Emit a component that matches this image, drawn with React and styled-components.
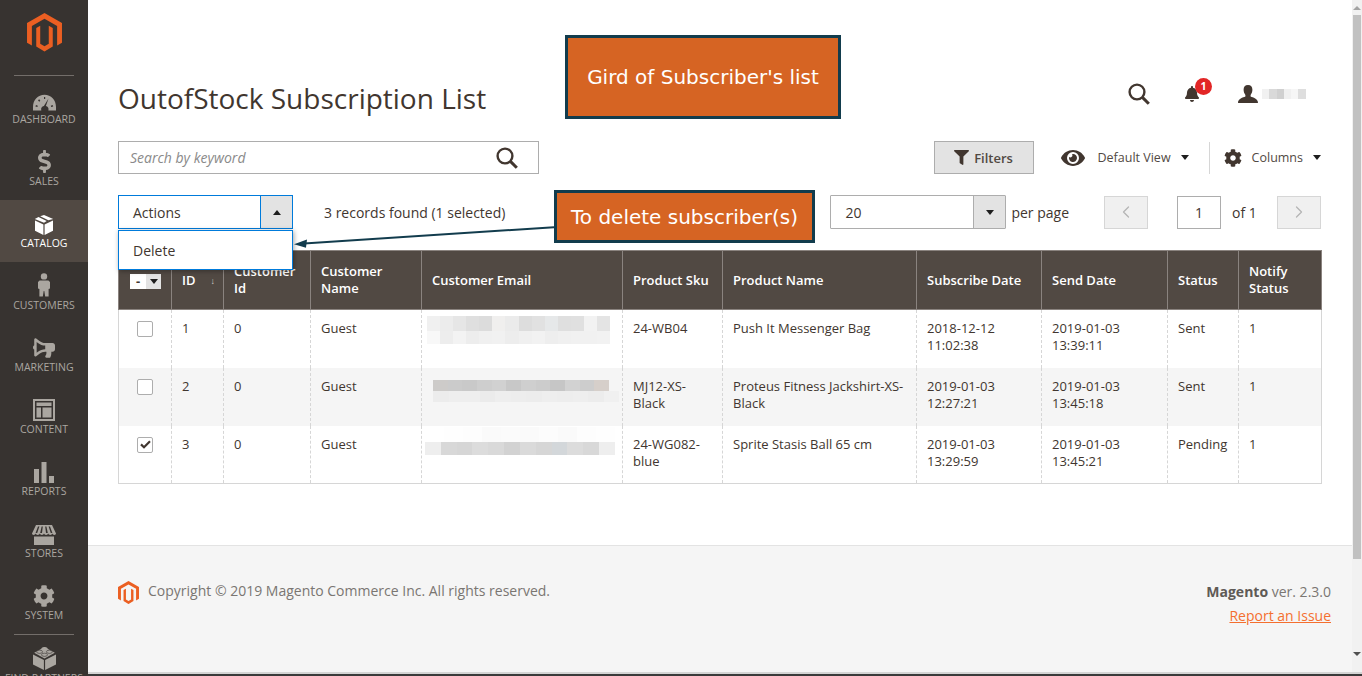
import styled, { createGlobalStyle } from "styled-components";
import { FaDollarSign, FaBullhorn, FaCog, FaBell, FaEye, FaFilter } from "react-icons/fa";
import { ChevronLeft, ChevronRight } from "lucide-react";

const GlobalStyle = createGlobalStyle`
  html, body { margin: 0; padding: 0; overflow: hidden; background: #fff; }
  * { box-sizing: border-box; }
  body { font-family: "Open Sans", sans-serif; color: #41362f; font-size: 14px; }
`;

const Page = styled.div`
  position: relative;
  display: flex;
  width: 1362px;
  height: 676px;
  overflow: hidden;
`;

const Sidebar = styled.nav`
  width: 88px;
  flex: none;
  height: 676px;
  background: #373330;
  overflow: hidden;
`;
const LogoWrap = styled.div`
  height: 75px;
  display: flex;
  justify-content: center;
  padding-top: 13px;
`;
const NavDivider = styled.div`
  height: 1px;
  margin: 0 14px;
  background: #736e6a;
`;
const NavItem = styled.div`
  height: 62px;
  display: flex;
  flex-direction: column;
  align-items: center;
  background: ${(p) => (p.$active ? "#514943" : "transparent")};
  color: ${(p) => (p.$active ? "#fff" : "#aaa6a0")};
`;
const NavIcon = styled.div`
  height: 36px;
  display: flex;
  align-items: flex-end;
  justify-content: center;
  padding-bottom: 1px;
  flex: none;
`;
const NavLabel = styled.div`
  font-size: 10.5px;
  line-height: 14px;
  height: 14px;
  white-space: nowrap;
`;

const Main = styled.div`
  flex: 1;
  display: flex;
  flex-direction: column;
  min-width: 0;
`;
const MainRow = styled.div`
  height: 672px;
  display: flex;
`;
const BottomStrip = styled.div`
  height: 4px;
  background: linear-gradient(#d4d4d4 0 2px, #3a3a3a 2px);
`;
const Content = styled.div`
  flex: 1;
  display: flex;
  flex-direction: column;
  min-width: 0;
`;
const Body = styled.div`
  height: 545px;
  padding: 0 31px 0 30px;
`;
const Scrollbar = styled.div`
  width: 10px;
  flex: none;
  background: #f1f1f1;
  display: flex;
  flex-direction: column;
  align-items: center;
`;
const ScrollThumb = styled.div`
  width: 8px;
  height: 544px;
  background: #c1c1c1;
`;
const ScrollArrow = styled.div`
  width: 0;
  height: 0;
  border-left: 4px solid transparent;
  border-right: 4px solid transparent;
  ${(p) => (p.$down ? "border-top: 4px solid #505050; margin-top: 93px;" : "border-bottom: 4px solid #a3a3a3; margin: 6px 0 5px;")}
`;

const HeaderBar = styled.header`
  height: 141px;
  display: flex;
  padding-top: 78px;
  justify-content: space-between;
`;
const Title = styled.h1`
  margin: 0;
  font-size: 28px;
  font-weight: 400;
  line-height: 40px;
  color: #41362f;
`;
const HeaderActions = styled.div`
  display: flex;
  align-items: flex-start;
  padding-top: 5px;
  margin-right: 8px;
`;
const HeaderIcon = styled.div`
  position: relative;
  display: flex;
  align-items: center;
  height: 22px;
  margin-left: ${(p) => p.$gap}px;
  color: #41362f;
`;
const Badge = styled.span`
  position: absolute;
  top: -5px;
  left: 11px;
  width: 17px;
  height: 17px;
  border-radius: 50%;
  background: #e22626;
  color: #fff;
  font-size: 10.5px;
  font-weight: 700;
  line-height: 17px;
  text-align: center;
`;
const BlurName = styled.div`
  display: flex;
  width: 51px;
  height: 10px;
  margin-left: 4px;
`;
const Pixel = styled.div`
  flex: 1;
  background: ${(p) => p.$c};
`;

const Toolbar = styled.div`
  height: 33px;
  display: flex;
  justify-content: space-between;
  margin-bottom: 21px;
`;
const SearchBox = styled.div`
  width: 421px;
  height: 33px;
  border: 1px solid #adadad;
  display: flex;
  align-items: center;
  justify-content: space-between;
  padding: 0 20px 0 11px;
  font-size: 14px;
  font-style: italic;
  color: #8a8a8a;
`;
const ToolbarRight = styled.div`
  display: flex;
  align-items: center;
`;
const FilterButton = styled.div`
  width: 100px;
  height: 33px;
  background: #e3e3e3;
  border: 1px solid #adadad;
  display: flex;
  align-items: center;
  justify-content: center;
  gap: 5px;
  font-size: 13px;
  font-weight: 600;
  color: #514943;
`;
const ViewSwitch = styled.div`
  display: flex;
  align-items: center;
  margin-left: ${(p) => p.$gap}px;
  font-size: 12.5px;
  color: #514943;
`;
const ViewIcon = styled.span`
  display: flex;
  margin-right: ${(p) => p.$gap}px;
  color: #41362f;
`;
const Caret = styled.span`
  width: 0;
  height: 0;
  border-left: 4px solid transparent;
  border-right: 4px solid transparent;
  ${(p) => (p.$up ? "border-bottom: 5px solid #1e1e1e;" : "border-top: 5px solid #1e1e1e;")}
  margin-left: ${(p) => p.$gap || 0}px;
`;
const VDivider = styled.div`
  width: 1px;
  height: 32px;
  background: #d6d6d6;
  margin: 0 14px 0 20px;
`;

const GridRow = styled.div`
  height: 34px;
  display: flex;
  justify-content: space-between;
  margin-bottom: 21px;
`;
const GridLeft = styled.div`
  display: flex;
  align-items: center;
`;
const ActionsSelect = styled.div`
  width: 175px;
  height: 34px;
  border: 1px solid #007bdb;
  display: flex;
  font-size: 14px;
  color: #41362f;
`;
const SelectValue = styled.div`
  flex: 1;
  display: flex;
  align-items: center;
  padding-left: 14px;
`;
const SelectArrow = styled.div`
  width: ${(p) => p.$w}px;
  background: #e3e3e3;
  border-left: 1px solid ${(p) => p.$line};
  display: flex;
  align-items: center;
  justify-content: center;
`;
const Records = styled.div`
  margin-left: 31px;
  font-size: 14px;
  color: #41362f;
`;
const Pager = styled.div`
  display: flex;
  align-items: center;
  font-size: 14px;
  color: #41362f;
`;
const PerPageSelect = styled.div`
  width: 176px;
  height: 34px;
  border: 1px solid #adadad;
  border-radius: 1px;
  display: flex;
`;
const PerPageText = styled.span`
  margin-left: 5px;
  margin-right: 35px;
`;
const PageButton = styled.div`
  width: 44px;
  height: 33px;
  background: #f0f0f0;
  border: 1px solid #d6d6d6;
  color: #b5b5b5;
  display: flex;
  align-items: center;
  justify-content: center;
`;
const PageInput = styled.div`
  width: 44px;
  height: 33px;
  margin-left: 29px;
  border: 1px solid #adadad;
  display: flex;
  align-items: center;
  justify-content: center;
`;
const PageOf = styled.span`
  width: 56px;
  padding-left: 11px;
`;

const Table = styled.table`
  width: 1203px;
  table-layout: fixed;
  border-collapse: collapse;
  font-size: 13px;
  line-height: 17px;
`;
const Col = styled.col`
  width: ${(p) => p.$w}px;
`;
const Th = styled.th`
  height: 59px;
  padding: 0 10px;
  background: #514943;
  border: 1px solid #8a837f;
  color: #fff;
  font-weight: 600;
  text-align: left;
  vertical-align: middle;
`;
const Td = styled.td`
  height: 58px;
  padding: 10px 10px 0;
  vertical-align: top;
  color: #41362f;
  border-left: 1px dashed #d6d6d6;
  border-right: 1px dashed #d6d6d6;
  border-bottom: ${(p) => (p.$last ? "1px solid #d6d6d6" : "0")};
  &:first-child { border-left: 1px solid #d6d6d6; }
  &:last-child { border-right: 1px solid #d6d6d6; }
`;
const Tr = styled.tr`
  background: ${(p) => (p.$alt ? "#f5f5f5" : "#fff")};
`;
const SortHead = styled.div`
  display: flex;
  justify-content: space-between;
  align-items: center;
`;
const SortArrow = styled.span`
  font-size: 9px;
  color: #d0cdcb;
  margin-right: -2px;
`;
const MassSelect = styled.div`
  display: flex;
  width: 31px;
  height: 15px;
  margin: 2px 0 0 1px;
`;
const MassDash = styled.span`
  flex: 1;
  background: #fff;
  color: #41362f;
  font-weight: 700;
  font-size: 13px;
  line-height: 14px;
  text-align: center;
`;
const MassArrow = styled.span`
  width: 15px;
  background: #e3e3e3;
  display: flex;
  align-items: center;
  justify-content: center;
`;
const CheckBox = styled.div`
  width: 16px;
  height: 16px;
  margin: 1px 0 0 8px;
  background: #fff;
  border: 1px solid #adadad;
  border-radius: 2px;
  display: flex;
  align-items: center;
  justify-content: center;
`;
const BlurBlock = styled.div`
  margin: ${(p) => p.$top}px 0 0 ${(p) => p.$left}px;
  width: ${(p) => p.$w}px;
`;
const BlurLine = styled.div`
  display: flex;
  height: ${(p) => p.$h}px;
  width: ${(p) => p.$w}px;
  margin-left: ${(p) => p.$ml || 0}px;
`;

const Footer = styled.footer`
  flex: 1;
  background: #f5f5f5;
  border-top: 1px solid #e3e3e3;
  padding: 35px 21px 0 30px;
  display: flex;
  justify-content: space-between;
  font-size: 14px;
  line-height: 20px;
  color: #7a7672;
`;
const Copyright = styled.div`
  display: flex;
  align-items: flex-start;
  gap: 9px;
`;
const FooterRight = styled.div`
  text-align: right;
`;
const Version = styled.div`
  margin-top: 1px;
  b { color: #5f5a56; font-weight: 700; }
`;
const ReportLink = styled.a`
  display: block;
  margin-top: 4px;
  color: #f46f2f;
  text-decoration: underline;
`;

// overlays, they sit on top of the grid
const Callout = styled.div`
  position: absolute;
  left: ${(p) => p.$x}px;
  top: ${(p) => p.$y}px;
  width: ${(p) => p.$w}px;
  height: ${(p) => p.$h}px;
  background: #d66423;
  border: 3px solid #123c4d;
  color: #fff;
  font-family: "DejaVu Sans", sans-serif;
  font-size: ${(p) => p.$size}px;
  letter-spacing: ${(p) => p.$ls || 0}px;
  display: flex;
  align-items: center;
  justify-content: center;
  white-space: nowrap;
`;
const ArrowSvg = styled.svg`
  position: absolute;
  left: 290px;
  top: 220px;
`;
const ActionsMenu = styled.div`
  position: absolute;
  left: 118px;
  top: 230px;
  width: 175px;
  height: 40px;
  background: #fff;
  border: 1px solid #007bdb;
  box-shadow: 1px 1px 5px rgba(0, 0, 0, 0.35);
  display: flex;
  align-items: center;
  padding-left: 14px;
  font-size: 14px;
  color: #41362f;
`;

const MagentoLogo = ({ size }) => (
  <svg width={size} height={size * 1.11} viewBox="0 0 36 40" fill="#eb5f22">
    <path d="M18 0 36 10.4V30.6L31 33.5V13.3L18 5.8 5 13.3V33.5L0 30.6V10.4Z" />
    <path d="M9.5 15.5 13.6 13.2V31.6L18 34.2 22.4 31.6V13.2L26.5 15.5V34.4L18 39.6 9.5 34.4Z" />
  </svg>
);
const SearchIcon = ({ size = 22 }) => (
  <svg width={size} height={size} viewBox="0 0 22 22" fill="none" stroke="#41362f" strokeWidth="2.4">
    <circle cx="9" cy="9" r="7.4" />
    <path d="M14.4 14.4 20.8 20.8" strokeWidth="3" />
  </svg>
);
const GaugeIcon = () => (
  <svg width="23" height="17" viewBox="0 0 23 17" fill="currentColor">
    <path d="M0 16.5V13C0 6 5 .8 11.5.8S23 6 23 13v3.5H15.4c.6-2.4-.6-4-2.5-4.5L15.5 4.5 10.9 11.9c-2 .2-3.3 2-2.6 4.6ZM3 11l-.6 1.6 2 .5.4-1.4ZM6.2 5.2 5 6.2l1.2 1.6 1.1-1ZM11 3v2h1.2V3ZM19.6 11l-1.8.7.4 1.4 2-.5Z" fillRule="evenodd" />
  </svg>
);
const BoxIcon = () => (
  <svg width="20" height="20" viewBox="0 0 20 20" fill="currentColor">
    <path d="M1 5.6 9.4 9.4V20L1 15.8ZM19 5.6V15.8L10.6 20V9.4ZM.8 3.9 4.5 2 12.7 6 10 7.8ZM6.2 1.2 10 0 19.2 3.9 14.4 5.2Z" />
  </svg>
);
const CustomerIcon = () => (
  <svg width="12" height="24" viewBox="0 0 12 24" fill="currentColor">
    <circle cx="6" cy="3.4" r="3.2" />
    <path d="M1.6 7.4H10.4L12 9V15.5L10.6 16V23.6H7.2L6.3 18H5.7L4.8 23.6H1.4V16L0 15.5V9Z" />
  </svg>
);
const ContentIcon = () => (
  <svg width="22" height="22" viewBox="0 0 22 22" fill="currentColor">
    <path d="M0 0H22V22H0ZM2 2V20H20V2Z" fillRule="evenodd" />
    <path d="M3.5 3.5H18.5V7H3.5ZM3.5 8.5H8V18.5H3.5ZM9.5 8.5H18.5V18.5H9.5Z" />
  </svg>
);
const ReportsIcon = () => (
  <svg width="20" height="21" viewBox="0 0 20 21" fill="currentColor">
    <rect x="0" y="7" width="5" height="14" />
    <rect x="7.5" y="0" width="5" height="21" />
    <rect x="15" y="14" width="5" height="7" />
  </svg>
);
const StoresIcon = () => (
  <svg width="24" height="20" viewBox="0 0 24 20" fill="currentColor">
    <path d="M2 20V11.5H22V20Z" />
    <path d="M4 0H20L24 8.5C24 10.4 20.8 10.4 20.4 8.6 20 10.4 16.6 10.4 16.2 8.6 15.8 10.4 12.4 10.4 12 8.6 11.6 10.4 8.2 10.4 7.8 8.6 7.4 10.4 4 10.4 3.6 8.6 3.2 10.4 0 10.4 0 8.5ZM6 1.5 3.6 8H5.2L7.4 1.5ZM9.6 1.5 8.2 8H10L10.8 1.5ZM13.2 1.5 14 8H15.8L14.4 1.5ZM16.6 1.5 18.8 8H20.4L18 1.5Z" fillRule="evenodd" />
  </svg>
);
const BrickIcon = () => (
  <svg width="23" height="24" viewBox="0 0 23 24" fill="currentColor">
    <path d="M0 8.5 10.9 14V24L0 18.5ZM23 8.5V18.5L12.1 24V14Z" />
    <path d="M11.5 1 21.8 6.8 11.5 12.6 1.2 6.8Z" />
    <ellipse cx="11.5" cy="2.6" rx="3" ry="1.6" />
    <ellipse cx="6.6" cy="5.8" rx="3" ry="1.6" stroke="#373330" strokeWidth=".6" />
    <ellipse cx="16.4" cy="5.8" rx="3" ry="1.6" stroke="#373330" strokeWidth=".6" />
    <ellipse cx="11.5" cy="8.8" rx="3" ry="1.6" stroke="#373330" strokeWidth=".6" />
  </svg>
);
const UserIcon = () => (
  <svg width="20" height="18" viewBox="0 0 20 18" fill="#41362f">
    <path d="M10 0C13 0 14.4 2 14.4 4.8 14.4 7 13.6 8.6 12.6 10V11.6C15 12.8 20 13.4 20 18H0C0 13.4 5 12.8 7.4 11.6V10C6.4 8.6 5.6 7 5.6 4.8 5.6 2 7 0 10 0Z" />
  </svg>
);
const CheckMark = () => (
  <svg width="11" height="9" viewBox="0 0 11 9" fill="none" stroke="#41362f" strokeWidth="2.2">
    <path d="M1 4.4 4 7.2 10 1.2" />
  </svg>
);

const navItems = [
  { label: "Dashboard", icon: <GaugeIcon /> },
  { label: "Sales", icon: <FaDollarSign size={23} /> },
  { label: "Catalog", icon: <BoxIcon />, active: true },
  { label: "Customers", icon: <CustomerIcon /> },
  { label: "Marketing", icon: <FaBullhorn size={22} style={{ transform: "scaleX(-1)" }} /> },
  { label: "Content", icon: <ContentIcon /> },
  { label: "Reports", icon: <ReportsIcon /> },
  { label: "Stores", icon: <StoresIcon /> },
  { label: "System", icon: <FaCog size={22} /> },
];

const columns = [
  { w: 53 }, { w: 52, label: "ID" }, { w: 87, label: "Customer Id" }, { w: 111, label: "Customer Name" },
  { w: 201, label: "Customer Email" }, { w: 100, label: "Product Sku" }, { w: 194, label: "Product Name" },
  { w: 125, label: "Subscribe Date" }, { w: 126, label: "Send Date" }, { w: 71, label: "Status" }, { w: 83, label: "Notify Status" },
];

const rows = [
  {
    id: 1, sku: "24-WB04", name: "Push It Messenger Bag", sub: ["2018-12-12", "11:02:38"], send: ["2019-01-03", "13:39:11"], status: "Sent",
    blur: {
      top: -4, left: -5, lines: [
        { h: 15, w: 183, px: ["#f0f0f0", "#ececec", "#e6e6e6", "#dfdfdf", "#dcdcdc", "#f0efee", "#ebebeb", "#dddddd", "#e1e1e1", "#e6e8e9", "#dfdfdf", "#e0e0e0", "#f2f2f2", "#e4e4e4"] },
        { h: 13, w: 183, px: ["#f8f8f8", "#ededed", "#f3f3f3", "#ededed", "#f0f0f0", "#f1f1f1", "#ededed", "#f0f0f0", "#f2f2f2", "#eeeeee", "#f0f0f0", "#f1f1f1", "#f1f1f1", "#f2f2f2"] },
      ],
    },
  },
  {
    id: 2, sku: "MJ12-XS-Black", name: "Proteus Fitness Jackshirt-XS-Black", sub: ["2019-01-03", "12:27:21"], send: ["2019-01-03", "13:45:18"], status: "Sent",
    blur: {
      top: 2, left: 1, lines: [
        { h: 11, w: 176, px: ["#cdcbc9", "#cbcbcb", "#c9c9c9", "#cecece", "#d1d1d1", "#c8c8c8", "#cfcfcf", "#cccccc", "#c6c6c6", "#d2d2d2", "#cdcdcd", "#d6cfca"] },
        { h: 11, w: 186, px: ["#ececec", "#eeeeee", "#eeeeee", "#ebebeb", "#eeeeee", "#ededed", "#ececec", "#eeeeee", "#ededed", "#eeeeee", "#ececec", "#f0f0f0"] },
      ],
    },
  },
  {
    id: 3, sku: "24-WG082-blue", name: "Sprite Stasis Ball 65 cm", sub: ["2019-01-03", "13:29:59"], send: ["2019-01-03", "13:45:21"], status: "Pending",
    blur: {
      top: -9, left: -7, lines: [
        { h: 15, w: 190, px: ["#ffffff", "#fefefe", "#fdfdfd", "#fafafa", "#fbfbfb", "#fafafa", "#fcfcfc", "#fafafa", "#fdfdfd", "#fefefe"] },
        { h: 13, w: 190, px: ["#eeeeee", "#d8d8d8", "#d6d6d6", "#dcdcdc", "#d9d9d9", "#d2d2d2", "#dadada", "#d6d6d6", "#d3d7da", "#dcdcdc", "#d8d8d8", "#eeeeee"] },
      ],
    },
  },
];

const userPixels = ["#f1f1f1", "#d9d9d9", "#d0d0d0", "#f0f0f0", "#f6f6f6", "#dedede", "#ffffff"];

export default function App() {
  const lastRow = rows.length - 1;
  return (
    <>
      <GlobalStyle />
      <Page>
        <Sidebar>
          <LogoWrap><MagentoLogo size={35} /></LogoWrap>
          <NavDivider />
          {navItems.map((item) => (
            <NavItem key={item.label} $active={item.active}>
              <NavIcon>{item.icon}</NavIcon>
              <NavLabel>{item.label.toUpperCase()}</NavLabel>
            </NavItem>
          ))}
          <NavDivider />
          <NavItem>
            <NavIcon><BrickIcon /></NavIcon>
            <NavLabel>FIND PARTNERS</NavLabel>
          </NavItem>
        </Sidebar>

        <Main>
          <MainRow>
            <Content>
              <Body>
                <HeaderBar>
                  <Title>OutofStock Subscription List</Title>
                  <HeaderActions>
                    <HeaderIcon $gap={0}><SearchIcon /></HeaderIcon>
                    <HeaderIcon $gap={34}>
                      <FaBell size={16} />
                      <Badge>1</Badge>
                    </HeaderIcon>
                    <HeaderIcon $gap={38}>
                      <UserIcon />
                      <BlurName>
                        {userPixels.map((c, i) => <Pixel key={i} $c={c} />)}
                      </BlurName>
                    </HeaderIcon>
                  </HeaderActions>
                </HeaderBar>

                <Toolbar>
                  <SearchBox>
                    Search by keyword
                    <SearchIcon />
                  </SearchBox>
                  <ToolbarRight>
                    <FilterButton><FaFilter size={15} color="#41362f" />Filters</FilterButton>
                    <ViewSwitch $gap={27}>
                      <ViewIcon $gap={13}><FaEye size={24} /></ViewIcon>
                      Default View
                      <Caret $gap={10} />
                    </ViewSwitch>
                    <VDivider />
                    <ViewSwitch $gap={0}>
                      <ViewIcon $gap={10}><FaCog size={18} /></ViewIcon>
                      Columns
                      <Caret $gap={10} />
                    </ViewSwitch>
                  </ToolbarRight>
                </Toolbar>

                <GridRow>
                  <GridLeft>
                    <ActionsSelect>
                      <SelectValue>Actions</SelectValue>
                      <SelectArrow $w={32} $line="#007bdb"><Caret $up /></SelectArrow>
                    </ActionsSelect>
                    <Records>3 records found (1 selected)</Records>
                  </GridLeft>
                  <Pager>
                    <PerPageSelect>
                      <SelectValue>20</SelectValue>
                      <SelectArrow $w={32} $line="#adadad"><Caret /></SelectArrow>
                    </PerPageSelect>
                    <PerPageText>per page</PerPageText>
                    <PageButton><ChevronLeft size={20} strokeWidth={1.5} /></PageButton>
                    <PageInput>1</PageInput>
                    <PageOf>of 1</PageOf>
                    <PageButton><ChevronRight size={20} strokeWidth={1.5} /></PageButton>
                  </Pager>
                </GridRow>

                <Table>
                  <colgroup>
                    {columns.map((c, i) => <Col key={i} $w={c.w} />)}
                  </colgroup>
                  <thead>
                    <tr>
                      <Th>
                        <MassSelect>
                          <MassDash>-</MassDash>
                          <MassArrow><Caret /></MassArrow>
                        </MassSelect>
                      </Th>
                      {columns.slice(1).map((c) => (
                        <Th key={c.label}>
                          {c.label === "ID" ? <SortHead>ID<SortArrow>↓</SortArrow></SortHead> : c.label}
                        </Th>
                      ))}
                    </tr>
                  </thead>
                  <tbody>
                    {rows.map((r, i) => (
                      <Tr key={r.id} $alt={i === 1}>
                        <Td $last={i === lastRow}>
                          <CheckBox>{r.id === 3 && <CheckMark />}</CheckBox>
                        </Td>
                        <Td $last={i === lastRow}>{r.id}</Td>
                        <Td $last={i === lastRow}>0</Td>
                        <Td $last={i === lastRow}>Guest</Td>
                        <Td $last={i === lastRow}>
                          <BlurBlock $top={r.blur.top} $left={r.blur.left} $w={190}>
                            {r.blur.lines.map((line, j) => (
                              <BlurLine key={j} $h={line.h} $w={line.w}>
                                {line.px.map((c, k) => <Pixel key={k} $c={c} />)}
                              </BlurLine>
                            ))}
                          </BlurBlock>
                        </Td>
                        <Td $last={i === lastRow}>{r.sku}</Td>
                        <Td $last={i === lastRow}>{r.name}</Td>
                        <Td $last={i === lastRow}>{r.sub[0]}<br />{r.sub[1]}</Td>
                        <Td $last={i === lastRow}>{r.send[0]}<br />{r.send[1]}</Td>
                        <Td $last={i === lastRow}>{r.status}</Td>
                        <Td $last={i === lastRow}>1</Td>
                      </Tr>
                    ))}
                  </tbody>
                </Table>
              </Body>

              <Footer>
                <Copyright>
                  <MagentoLogo size={21} />
                  Copyright © 2019 Magento Commerce Inc. All rights reserved.
                </Copyright>
                <FooterRight>
                  <Version><b>Magento</b> ver. 2.3.0</Version>
                  <ReportLink>Report an Issue</ReportLink>
                </FooterRight>
              </Footer>
            </Content>
            <Scrollbar>
              <ScrollArrow />
              <ScrollThumb />
              <ScrollArrow $down />
            </Scrollbar>
          </MainRow>
          <BottomStrip />
        </Main>

        <ActionsMenu>Delete</ActionsMenu>
        <Callout $x={565} $y={35} $w={276} $h={84} $size={20}>Gird of Subscriber's list</Callout>
        <Callout $x={554} $y={190} $w={261} $h={53} $size={20}>To delete subscriber(s)</Callout>
        <ArrowSvg width="270" height="30" viewBox="0 0 270 30">
          <path d="M264 7.2 14 23.6" stroke="#123c4d" strokeWidth="2" fill="none" />
          <path d="M4 24.2 17 19.6 16 27.8Z" fill="#123c4d" />
        </ArrowSvg>
      </Page>
    </>
  );
}
